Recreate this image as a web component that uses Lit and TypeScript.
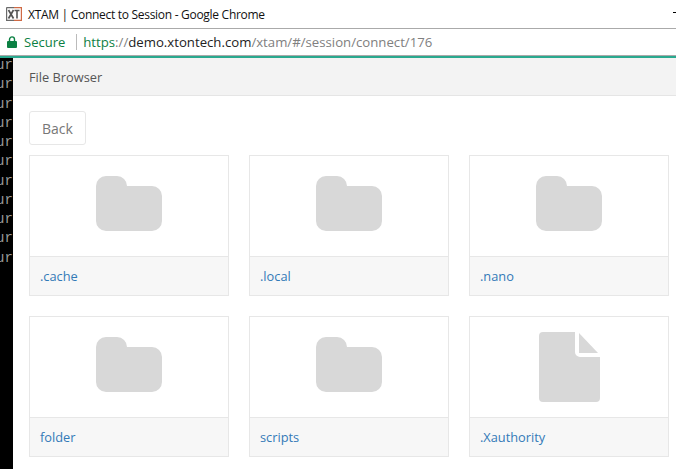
import { LitElement, html, css, svg } from "lit";
import { customElement } from "lit/decorators.js";

const folder = svg`<svg class="ico up" width="66" height="55" viewBox="0 0 66 55"><path fill="#d8d8d8" d="M10 0h11a10 10 0 0 1 10 10h25a10 10 0 0 1 10 10v25a10 10 0 0 1-10 10H10A10 10 0 0 1 0 45V10A10 10 0 0 1 10 0z"/></svg>`;
const file = svg`<svg class="ico" width="61" height="70" viewBox="0 0 61 70"><path fill="#d8d8d8" d="M4 0h32v20a5 5 0 0 0 5 5h20v41a4 4 0 0 1-4 4H4a4 4 0 0 1-4-4V4a4 4 0 0 1 4-4z"/><path fill="#d8d8d8" d="M40 1l19 20H40z"/></svg>`;

const items = [
  { name: ".cache", kind: "folder" },
  { name: ".local", kind: "folder" },
  { name: ".nano", kind: "folder" },
  { name: "folder", kind: "folder" },
  { name: "scripts", kind: "folder" },
  { name: ".Xauthority", kind: "file" },
];

@customElement("app-root")
export class AppRoot extends LitElement {
  static styles = css`
    :host { display: block; width: 676px; height: 469px; overflow: hidden; background: #fff; font-family: "Open Sans", sans-serif; }
    .title { height: 28px; display: flex; align-items: center; padding-left: 6px; gap: 6px; font-size: 12px; letter-spacing: -0.29px; color: #111; position: relative; border-bottom: 1px solid #aaa; }
    .title span { white-space: nowrap; }
    .min { position: absolute; right: 0; top: 12px; width: 3px; height: 1px; background: #000; }
    .addr { height: 26px; display: flex; align-items: center; padding-left: 7px; font-size: 13.2px; border-bottom: 1px solid #aaa; white-space: nowrap; }
    .secure { color: #0b8043; font-size: 13px; margin-left: 7px; }
    .sep { width: 1px; height: 16px; background: #bbb; margin: 0 6px 0 11px; }
    .https { color: #0b8043; }
    .host { color: #222; }
    .path { color: #808080; }
    .accent { height: 2px; background: #2aa98f; }
    .main { display: flex; height: 412px; }
    .term { width: 13px; background: #000; color: #999; font: 14px/19.25px "Liberation Mono", monospace; overflow: hidden; flex: none; }
    .rows { margin: -2px 0 0 -4px; }
    .modal { flex: 1; min-width: 0; }
    .head { height: 37px; background: #f3f3f3; border-bottom: 1px solid #e5e5e5; display: flex; align-items: center; padding-left: 16px; font-size: 12.8px; color: #555; }
    .body { padding: 15px 7px 0 16px; }
    .back { display: block; width: 57px; height: 34px; box-sizing: border-box; border: 1px solid #e7e7e7; border-radius: 3px; background: #fff; color: #777; font: 14px "Open Sans", sans-serif; padding: 0; margin-bottom: 10px; }
    .grid { display: grid; grid-template-columns: repeat(3, 200px); gap: 20px; }
    .card { height: 141px; box-sizing: border-box; border: 1px solid #e7e7e7; display: flex; flex-direction: column; }
    .thumb { height: 100px; display: flex; justify-content: center; align-items: center; background: #fff; border-bottom: 1px solid #e7e7e7; flex: none; }
    .up { margin-bottom: 5px; }
    .name { flex: 1; background: #f7f7f7; display: flex; align-items: center; padding-left: 10px; font-size: 12.8px; color: #337ab7; }
    .logo { flex: none; }
  `;

  render() {
    return html`
      <div class="title">
        <svg class="logo" width="16" height="14" viewBox="0 0 16 14">
          <path d="M0.5 0.5H8M0.5 0.5V13.5H8" fill="none" stroke="#6a6a6a" stroke-width="1.4"/>
          <path d="M8 0.5H15.5V13.5H8" fill="none" stroke="#cf6a45" stroke-width="1.4"/>
          <path d="M2.5 3l5 8.5M7.5 3l-5 8.5" stroke="#555" stroke-width="1.7" fill="none"/>
          <path d="M8.5 3.5h5M11 3v8.5" stroke="#555" stroke-width="1.6" fill="none"/>
        </svg>
        <span>XTAM | Connect to Session - Google Chrome</span>
        <div class="min"></div>
      </div>
      <div class="addr">
        <svg width="10" height="12" viewBox="0 0 10 12"><path fill="#0b8043" d="M1 5h8a1 1 0 0 1 1 1v5a1 1 0 0 1-1 1H1a1 1 0 0 1-1-1V6a1 1 0 0 1 1-1z"/><path fill="none" stroke="#0b8043" stroke-width="1.4" d="M2.5 5.5V3.4a2.5 2.5 0 0 1 5 0v2.1"/></svg>
        <span class="secure">Secure</span><span class="sep"></span>
        <span><span class="https">https</span><span class="path">://</span><span class="host">demo.xtontech.com</span><span class="path">/xtam/#/session/connect/176</span></span>
      </div>
      <div class="accent"></div>
      <div class="main">
        <div class="term"><div class="rows">${Array.from({ length: 11 }, () => html`<div>ur</div>`)}</div></div>
        <div class="modal">
          <div class="head">File Browser</div>
          <div class="body">
            <button class="back">Back</button>
            <div class="grid">
              ${items.map(
                (i) => html`<div class="card">
                  <div class="thumb">${i.kind === "folder" ? folder : file}</div>
                  <div class="name">${i.name}</div>
                </div>`
              )}
            </div>
          </div>
        </div>
      </div>
    `;
  }
}
